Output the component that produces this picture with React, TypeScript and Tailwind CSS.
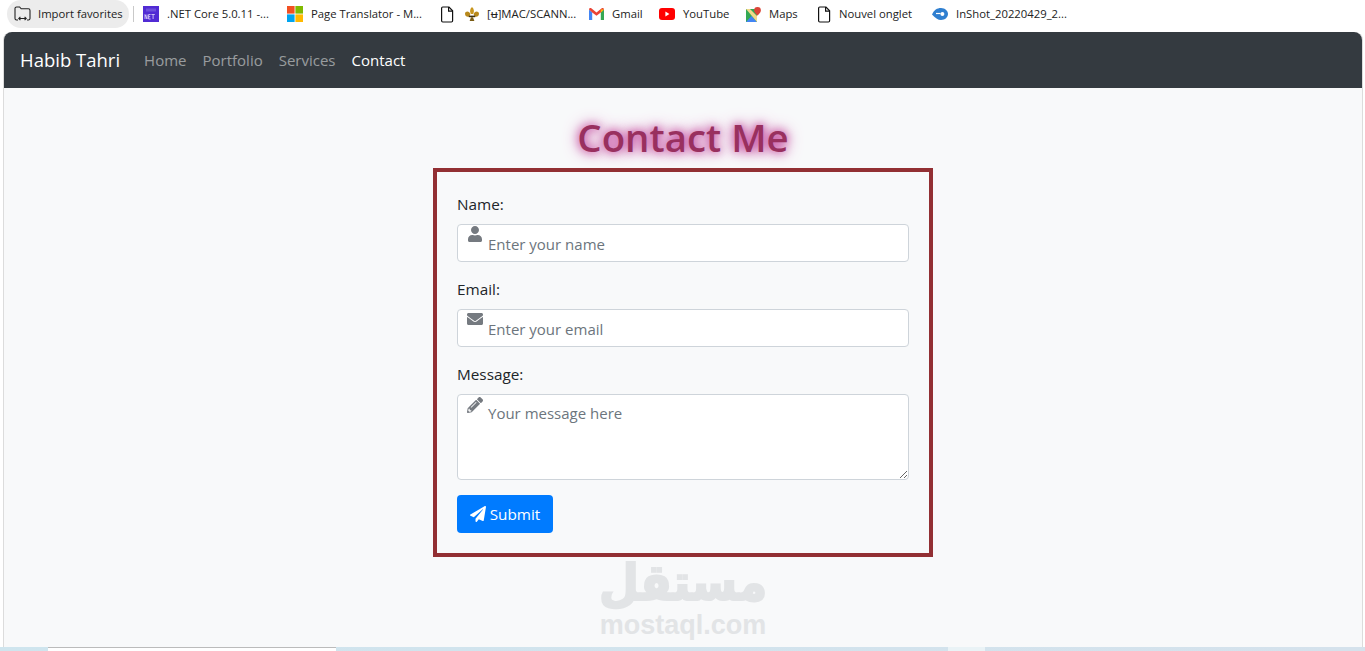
import React from 'react';
import { FaUser, FaEnvelope, FaPencilAlt, FaPaperPlane } from 'react-icons/fa';

const FONT = "font-['Open_Sans','Noto_Sans',sans-serif]";

function PageIcon() {
  return (
    <svg width="14" height="17" viewBox="0 0 14 17" fill="none" stroke="#111" strokeWidth="1.2">
      <path d="M1.6 2.2a1.2 1.2 0 0 1 1.2-1.2H9l3.6 3.8v10a1.2 1.2 0 0 1-1.2 1.2H2.8a1.2 1.2 0 0 1-1.2-1.2z" />
      <path d="M8.6 1v4.2h4" />
    </svg>
  );
}

function ImportIcon() {
  return (
    <svg width="17" height="16" viewBox="0 0 17 16" fill="none" stroke="#222" strokeWidth="1.1">
      <path d="M4 14H2.6A1.6 1.6 0 0 1 1 12.400V2.600A1.600 1.600 0 0 1 2.600 1h3l1.600 1.800h7.200A1.600 1.600 0 0 1 16 4.400v8a1.600 1.600 0 0 1-1.600 1.600H13" />
      <path d="M5 12.500h7M6.400 10.900 4.800 12.500l1.600 1.600M10.600 10.900l1.600 1.600-1.600 1.600" />
    </svg>
  );
}

function NetIcon() {
  return (
    <svg width="16" height="16" viewBox="0 0 16 16">
      <rect width="16" height="16" fill="#512bd4" />
      <rect x="3" y="2.500" width="10" height="3" fill="#6d50dc" />
      <path d="M2 13V8.500l2 4.500V8.500M5.600 8.500v4.500h2M5.600 10.700h1.600M5.600 8.500h2M8.400 8.500h3.400M10.100 8.500V13" fill="none" stroke="#e3dcfa" strokeWidth="0.8" />
    </svg>
  );
}

function MsIcon() {
  return (
    <svg width="16" height="16" viewBox="0 0 16 16">
      <rect width="7.600" height="7.600" fill="#f25022" />
      <rect x="8.400" width="7.600" height="7.600" fill="#7fba00" />
      <rect y="8.400" width="7.600" height="7.600" fill="#00a4ef" />
      <rect x="8.400" y="8.400" width="7.600" height="7.600" fill="#ffb900" />
    </svg>
  );
}

function FleurIcon() {
  return (
    <svg width="14" height="14" viewBox="0 0 14 14">
      <path d="M7 0c2.200 2 2.400 4.400 1.200 7H5.800C4.600 4.400 4.800 2 7 0z" fill="#c8961e" />
      <path d="M0 6.400C.6 3.800 4 3.600 5.400 7l-1 2.400C2 10.200 0 9 0 6.400zM14 6.400C13.400 3.800 10 3.600 8.600 7l1 2.400c2.400.8 4.400-.4 4.400-3z" fill="#b8891c" />
      <path d="M3.800 8.600h6.400v1.600H3.800z" fill="#3d2f10" />
      <path d="M6 10.200h2l1.400 3.800H4.600z" fill="#7a5c14" />
    </svg>
  );
}

function GmailIcon() {
  return (
    <svg width="15" height="12" viewBox="0 0 15 12">
      <path d="M0 1.400V12h3.200V4.500z" fill="#4285f4" />
      <path d="M15 1.400V12h-3.200V4.500z" fill="#34a853" />
      <path d="M0 1.400C0 .2 1.300-.4 2.300.3L7.500 4.400 12.700.3c1-.7 2.300-.1 2.300 1.100l-3.200 3.100-4.300 3.300-4.300-3.300z" fill="#ea4335" />
      <path d="M11.800 1.600 15 1.400l-3.200 3.100z" fill="#fbbc04" />
    </svg>
  );
}

function YoutubeIcon() {
  return (
    <svg width="16" height="12" viewBox="0 0 16 12">
      <rect width="16" height="12" rx="3" fill="#f00" />
      <path d="M6.400 3.600v4.800L10.400 6z" fill="#fff" />
    </svg>
  );
}

function MapsIcon() {
  return (
    <svg width="15" height="15" viewBox="0 0 15 15">
      <path d="M0 2h11v13H0z" fill="#34a853" />
      <path d="M0 15l5.500-6 5.500 6z" fill="#4285f4" />
      <path d="M0 2l11 13V9L4 2z" fill="#f1d98a" />
      <path d="M11.500 0a3.400 3.400 0 0 1 3.400 3.400c0 2.200-3.400 5-3.400 5s-3.400-2.800-3.400-5A3.400 3.400 0 0 1 11.500 0z" fill="#db4437" />
    </svg>
  );
}

function InshotIcon() {
  return (
    <svg width="16" height="12" viewBox="0 0 16 12">
      <path d="M0 6.500C2 2 5 0 9 0c4 0 7 3 7 6s-3 6-7 6C6 12 3 10 0 6.500z" fill="#2f7fd0" />
      <path d="M4 5.500h4.500" stroke="#fff" strokeWidth="1.200" />
      <circle cx="10.400" cy="6" r="2" fill="#fff" />
    </svg>
  );
}

const bookmarks = [
  { icon: <NetIcon />, label: '.NET Core 5.0.11 -...', w: 'w-[144px]' },
  { icon: <MsIcon />, label: 'Page Translator - M...', w: 'w-[153px]' },
  { icon: <PageIcon />, label: '', w: 'w-[25px]' },
  { icon: <FleurIcon />, label: '[\u0289]MAC/SCANN...', w: 'w-[124px]' },
  { icon: <GmailIcon />, label: 'Gmail', w: 'w-[70px]' },
  { icon: <YoutubeIcon />, label: 'YouTube', w: 'w-[87px]' },
  { icon: <MapsIcon />, label: 'Maps', w: 'w-[71px]' },
  { icon: <PageIcon />, label: 'Nouvel onglet', w: 'w-[115px]' },
  { icon: <InshotIcon />, label: 'InShot_20220429_2...', w: 'w-[150px]' },
];

function BookmarksBar() {
  return (
    <div className="h-8 bg-white flex items-center pl-[7px] pb-[4px] text-[11.300px] text-[#222]">
      <div className="h-[28px] w-[122px] rounded-full bg-[#ececec] flex items-center gap-[7px] pl-[7px] shrink-0">
        <ImportIcon />
        <span>Import favorites</span>
      </div>
      <div className="w-px h-[16px] bg-[#c9c9c9] ml-[4px] mr-[9px] shrink-0" />
      {bookmarks.map((b, i) => (
        <div key={i} className={`flex items-center gap-[8px] shrink-0 ${b.w}`}>
          {b.icon}
          {b.label && <span className="whitespace-nowrap">{b.label}</span>}
        </div>
      ))}
    </div>
  );
}

function Navbar() {
  return (
    <nav className="h-14 bg-[#343a40] rounded-t-[8px] flex items-center px-4">
      <span className="text-[18.500px] text-white mr-[24px]">Habib Tahri</span>
      <div className="flex gap-4 text-[15px] text-[#ffffff80]">
        <span>Home</span>
        <span>Portfolio</span>
        <span>Services</span>
        <span className="text-white">Contact</span>
      </div>
    </nav>
  );
}

function Field({ label, icon, placeholder }: { label: string; icon: React.ReactNode; placeholder: string }) {
  return (
    <div className="mb-[15px]">
      <label className="block text-[15.300px] leading-[24px] mb-[8px] text-[#212529]">{label}</label>
      <div className="relative">
        <div className="absolute left-[10px] top-[2px] text-[#757a80]">{icon}</div>
        <input
          readOnly
          placeholder={placeholder}
          className="block w-full h-[38px] rounded-[4px] border border-[#ced4da] bg-white pl-[30px] pr-3 pt-[2px] text-[15px] placeholder:text-[#6c757d] outline-none"
        />
      </div>
    </div>
  );
}

export default function App() {
  return (
    <div className={`w-[1365px] h-[651px] overflow-hidden bg-white flex flex-col ${FONT}`}>
      <BookmarksBar />
      <div className="flex-1 ml-[3px] mr-[2px] border-x border-[#dcdcdc] rounded-t-[8px]">
        <Navbar />
        <main className="h-[559px] bg-[#f8f9fa] flex flex-col items-center pt-[25px]">
          <h1 className="text-[38.400px] leading-[48px] font-semibold text-[#99305f] mb-[7px] [text-shadow:0_0_8px_#c2409a,0_0_16px_#c2409a]">
            Contact Me
          </h1>
          <form className="w-[500px] border-[4px] border-[#922f33] px-[20px] pt-[20px] pb-[20px]">
            <Field label="Name:" icon={<FaUser size={16} />} placeholder="Enter your name" />
            <Field label="Email:" icon={<FaEnvelope size={16} />} placeholder="Enter your email" />
            <div className="mb-[15px]">
              <label className="block text-[15.300px] leading-[24px] mb-[8px] text-[#212529]">Message:</label>
              <div className="relative">
                <div className="absolute left-[10px] top-[3px] text-[#757a80]">
                  <FaPencilAlt size={16} />
                </div>
                <textarea
                  readOnly
                  placeholder="Your message here"
                  className="block w-full h-[86px] rounded-[4px] border border-[#ced4da] bg-white pl-[30px] pr-3 pt-[7px] pb-[6px] text-[15px] placeholder:text-[#6c757d] outline-none"
                />
              </div>
            </div>
            <button type="button" className="h-[38px] w-[96px] rounded-[4px] bg-[#007bff] text-white text-[15.300px] flex items-center justify-center gap-[4px]">
              <FaPaperPlane size={16} />
              Submit
            </button>
          </form>
          <div className="flex flex-col items-center text-[#e2e4e6] font-bold">
            <span className="font-['DejaVu_Sans',sans-serif] text-[46px] leading-[56px] origin-bottom scale-y-110 [-webkit-text-stroke:2px_#e2e4e6]" dir="rtl">مستقل</span>
            <span className="font-['Liberation_Sans',sans-serif] text-[27px] leading-[24px]">mostaql.com</span>
          </div>
        </main>
      </div>
      <div className="h-[4px] shrink-0 bg-gradient-to-r from-[#cfe5ee] to-[#d5e2ec] flex">
        <div className="ml-[48px] w-[288px] bg-white border-t border-[#bbb]" />
        <div className="ml-[612px] w-[37px] bg-[#eaf3f6]" />
      </div>
    </div>
  );
}
